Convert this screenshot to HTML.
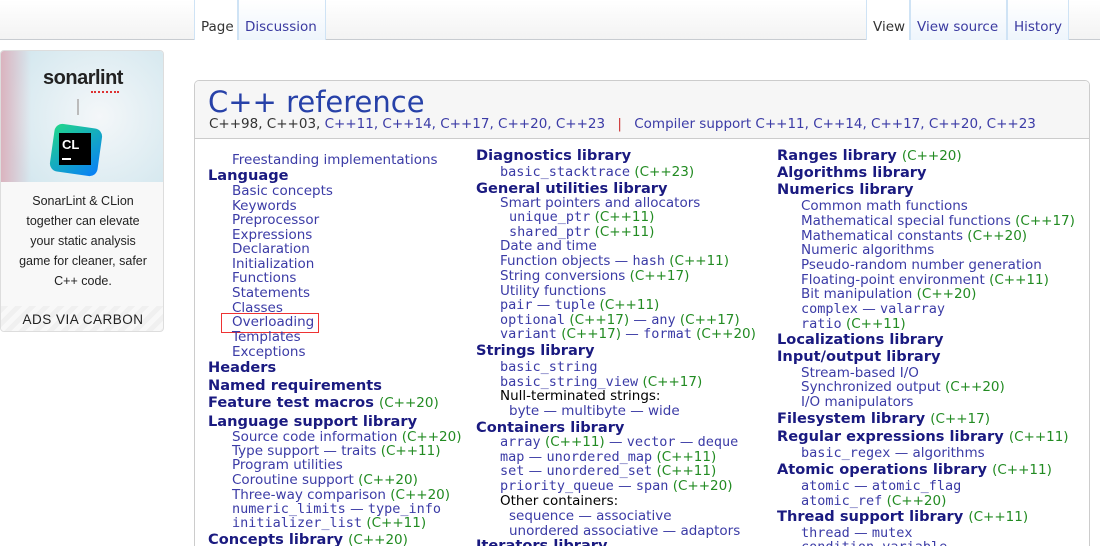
<!DOCTYPE html>
<html><head><meta charset="utf-8"><style>
*{margin:0;padding:0;box-sizing:border-box}
html,body{width:1100px;height:546px;overflow:hidden}
body{background:#fff;font-family:"DejaVu Sans","Liberation Sans",sans-serif;position:relative;color:#000}
.top{position:absolute;left:0;top:0;width:1100px;height:40px;background:linear-gradient(#fff,#f3f3f3);border-bottom:1px solid #c8ccd1}
.tab{position:absolute;top:0;height:40px;background:linear-gradient(#fff,#eef5fc);border-left:1px solid #cfe3f5;border-right:1px solid #cfe3f5;font-size:13.5px;color:#3a3aa0;padding:19px 6px 0}
.tab.sel{background:#fff;color:#333}
.ad{position:absolute;left:0;top:50px;width:164px;height:282px;background:#f8f8f8;border:1px solid #ddd;border-radius:4px;overflow:hidden}
.adimg{position:absolute;left:0;top:0;width:164px;height:131px;background:radial-gradient(circle at 60% 50%,#f4f7f9,#d5e8ef 80%)}
.adtxt{position:absolute;top:140px;left:0;width:164px;text-align:center;font:12.5px/20px "Liberation Sans",sans-serif;color:#222}
.adfoot{position:absolute;top:255px;left:0;width:164px;height:27px;text-align:center;font:13.5px/27px "Liberation Sans",sans-serif;color:#222;letter-spacing:.5px;background:repeating-linear-gradient(135deg,#f0f0f0 0 5px,#f8f8f8 5px 10px)}
.box{position:absolute;left:194px;top:80px;width:896px;height:480px;border:1px solid #ccc;border-radius:5px;background:#fff;overflow:hidden}
.hdr{position:absolute;left:0;top:0;width:896px;height:58px;background:#f6f6f6;border-bottom:1px solid #ccc}
.l{position:absolute;white-space:nowrap;font-size:13.5px;line-height:16px;color:#3b3ba6;margin-top:1px}
.h{font-weight:bold;font-size:14.6px;color:#1a1a80}
.m{font-family:"DejaVu Sans Mono","Liberation Mono",monospace;font-size:13.5px}
.g{color:#228b22;font-family:"DejaVu Sans",sans-serif;font-weight:normal;font-size:13.5px}
.k{color:#000}
</style></head><body>
<div class="top"></div>
<div class="tab sel" style="left:194px;width:44px">Page</div>
<div class="tab" style="left:238px;width:88px">Discussion</div>
<div class="tab sel" style="left:866px;width:44px">View</div>
<div class="tab" style="left:910px;width:97px">View source</div>
<div class="tab" style="left:1007px;width:62px">History</div>

<div class="ad"><div class="adimg">
<div style="position:absolute;left:0;top:0;width:30px;height:131px;background:linear-gradient(90deg,rgba(230,80,100,.35),transparent)"></div>
<div style="position:absolute;left:0;width:164px;top:16px;text-align:center;font:bold 20px 'Liberation Sans',sans-serif;color:#222;letter-spacing:-.5px">sonarlint</div>
<div style="position:absolute;left:90px;top:39px;width:28px;height:3px;border-bottom:2px dotted #d33"></div>
<div style="position:absolute;left:76px;top:48px;width:2px;height:16px;background:#bbb"></div>
<div style="position:absolute;left:51px;top:75px;width:48px;height:48px;background:linear-gradient(135deg,#21d789,#087cfa);border-radius:8px;transform:rotate(8deg)"></div>
<div style="position:absolute;left:58px;top:82px;width:32px;height:32px;background:#000;color:#fff;font:bold 13px 'Liberation Sans',sans-serif;padding:4px 0 0 3px">CL<div style="width:9px;height:2px;background:#fff;margin-top:6px"></div></div>
</div>
<div class="adtxt">SonarLint &amp; CLion<br>together can elevate<br>your static analysis<br>game for cleaner, safer<br>C++ code.</div>
<div class="adfoot">ADS VIA CARBON</div></div>

<div class="box"><div class="hdr"></div>
<div class="l" style="left:13px;top:2px;font-size:29px;line-height:36px;color:#2741a8">C++ reference</div>
<div class="l" style="left:14px;top:34px;font-size:13.5px;letter-spacing:0px"><span style="color:#333">C++98, C++03, </span>C++11, C++14, C++17, C++20, C++23 <span style="color:#c33;margin:0 8px">|</span> Compiler support C++11, C++14, C++17, C++20, C++23</div>
</div>

<div class="l" style="left:232px;top:151px">Freestanding implementations</div>
<div class="l h" style="left:208px;top:167px">Language</div>
<div class="l" style="left:232px;top:182px">Basic concepts</div>
<div class="l" style="left:232px;top:197px">Keywords</div>
<div class="l" style="left:232px;top:211px">Preprocessor</div>
<div class="l" style="left:232px;top:226px">Expressions</div>
<div class="l" style="left:232px;top:240px">Declaration</div>
<div class="l" style="left:232px;top:255px">Initialization</div>
<div class="l" style="left:232px;top:269px">Functions</div>
<div class="l" style="left:232px;top:284px">Statements</div>
<div class="l" style="left:232px;top:299px">Classes</div>
<div class="l" style="left:232px;top:313px">Overloading</div>
<div style="position:absolute;left:221px;top:313px;width:98px;height:20px;border:1px solid #e33"></div>
<div class="l" style="left:232px;top:328px">Templates</div>
<div class="l" style="left:232px;top:343px">Exceptions</div>
<div class="l h" style="left:208px;top:359px">Headers</div>
<div class="l h" style="left:208px;top:377px">Named requirements</div>
<div class="l h" style="left:208px;top:394px">Feature test macros <span class="g">(C++20)</span></div>
<div class="l h" style="left:208px;top:413px">Language support library</div>
<div class="l" style="left:232px;top:428px">Source code information <span class="g">(C++20)</span></div>
<div class="l" style="left:232px;top:442px">Type support — traits <span class="g">(C++11)</span></div>
<div class="l" style="left:232px;top:456px">Program utilities</div>
<div class="l" style="left:232px;top:471px">Coroutine support <span class="g">(C++20)</span></div>
<div class="l" style="left:232px;top:486px">Three-way comparison <span class="g">(C++20)</span></div>
<div class="l" style="left:232px;top:500px"><span class="m">numeric_limits</span> — <span class="m">type_info</span></div>
<div class="l" style="left:232px;top:514px"><span class="m">initializer_list</span> <span class="g">(C++11)</span></div>
<div class="l h" style="left:208px;top:531px">Concepts library <span class="g">(C++20)</span></div>

<div class="l h" style="left:476px;top:147px">Diagnostics library</div>
<div class="l" style="left:500px;top:163px"><span class="m">basic_stacktrace</span> <span class="g">(C++23)</span></div>
<div class="l h" style="left:476px;top:180px">General utilities library</div>
<div class="l" style="left:500px;top:194px">Smart pointers and allocators</div>
<div class="l" style="left:509px;top:208px"><span class="m">unique_ptr</span> <span class="g">(C++11)</span></div>
<div class="l" style="left:509px;top:223px"><span class="m">shared_ptr</span> <span class="g">(C++11)</span></div>
<div class="l" style="left:500px;top:237px">Date and time</div>
<div class="l" style="left:500px;top:252px">Function objects — <span class="m">hash</span> <span class="g">(C++11)</span></div>
<div class="l" style="left:500px;top:267px">String conversions <span class="g">(C++17)</span></div>
<div class="l" style="left:500px;top:282px">Utility functions</div>
<div class="l" style="left:500px;top:296px"><span class="m">pair</span> — <span class="m">tuple</span> <span class="g">(C++11)</span></div>
<div class="l" style="left:500px;top:311px"><span class="m">optional</span> <span class="g">(C++17)</span> — <span class="m">any</span> <span class="g">(C++17)</span></div>
<div class="l" style="left:500px;top:325px"><span class="m">variant</span> <span class="g">(C++17)</span> — <span class="m">format</span> <span class="g">(C++20)</span></div>
<div class="l h" style="left:476px;top:342px">Strings library</div>
<div class="l" style="left:500px;top:358px"><span class="m">basic_string</span></div>
<div class="l" style="left:500px;top:373px"><span class="m">basic_string_view</span> <span class="g">(C++17)</span></div>
<div class="l k" style="left:500px;top:387px">Null-terminated strings:</div>
<div class="l" style="left:509px;top:402px">byte — multibyte — wide</div>
<div class="l h" style="left:476px;top:419px">Containers library</div>
<div class="l" style="left:500px;top:433px"><span class="m">array</span> <span class="g">(C++11)</span> — <span class="m">vector</span> — <span class="m">deque</span></div>
<div class="l" style="left:500px;top:448px"><span class="m">map</span> — <span class="m">unordered_map</span> <span class="g">(C++11)</span></div>
<div class="l" style="left:500px;top:462px"><span class="m">set</span> — <span class="m">unordered_set</span> <span class="g">(C++11)</span></div>
<div class="l" style="left:500px;top:477px"><span class="m">priority_queue</span> — <span class="m">span</span> <span class="g">(C++20)</span></div>
<div class="l k" style="left:500px;top:492px">Other containers:</div>
<div class="l" style="left:509px;top:507px">sequence — associative</div>
<div class="l" style="left:509px;top:522px">unordered associative — adaptors</div>
<div class="l h" style="left:476px;top:537px">Iterators library</div>

<div class="l h" style="left:777px;top:147px">Ranges library <span class="g">(C++20)</span></div>
<div class="l h" style="left:777px;top:164px">Algorithms library</div>
<div class="l h" style="left:777px;top:181px">Numerics library</div>
<div class="l" style="left:801px;top:197px">Common math functions</div>
<div class="l" style="left:801px;top:212px">Mathematical special functions <span class="g">(C++17)</span></div>
<div class="l" style="left:801px;top:227px">Mathematical constants <span class="g">(C++20)</span></div>
<div class="l" style="left:801px;top:241px">Numeric algorithms</div>
<div class="l" style="left:801px;top:256px">Pseudo-random number generation</div>
<div class="l" style="left:801px;top:271px">Floating-point environment <span class="g">(C++11)</span></div>
<div class="l" style="left:801px;top:285px">Bit manipulation <span class="g">(C++20)</span></div>
<div class="l" style="left:801px;top:300px"><span class="m">complex</span> — <span class="m">valarray</span></div>
<div class="l" style="left:801px;top:315px"><span class="m">ratio</span> <span class="g">(C++11)</span></div>
<div class="l h" style="left:777px;top:331px">Localizations library</div>
<div class="l h" style="left:777px;top:348px">Input/output library</div>
<div class="l" style="left:801px;top:364px">Stream-based I/O</div>
<div class="l" style="left:801px;top:378px">Synchronized output <span class="g">(C++20)</span></div>
<div class="l" style="left:801px;top:393px">I/O manipulators</div>
<div class="l h" style="left:777px;top:410px">Filesystem library <span class="g">(C++17)</span></div>
<div class="l h" style="left:777px;top:428px">Regular expressions library <span class="g">(C++11)</span></div>
<div class="l" style="left:801px;top:444px"><span class="m">basic_regex</span> — algorithms</div>
<div class="l h" style="left:777px;top:461px">Atomic operations library <span class="g">(C++11)</span></div>
<div class="l" style="left:801px;top:477px"><span class="m">atomic</span> — <span class="m">atomic_flag</span></div>
<div class="l" style="left:801px;top:492px"><span class="m">atomic_ref</span> <span class="g">(C++20)</span></div>
<div class="l h" style="left:777px;top:508px">Thread support library <span class="g">(C++11)</span></div>
<div class="l" style="left:801px;top:524px"><span class="m">thread</span> — <span class="m">mutex</span></div>
<div class="l" style="left:801px;top:538px"><span class="m">condition_variable</span></div>
</body></html>
